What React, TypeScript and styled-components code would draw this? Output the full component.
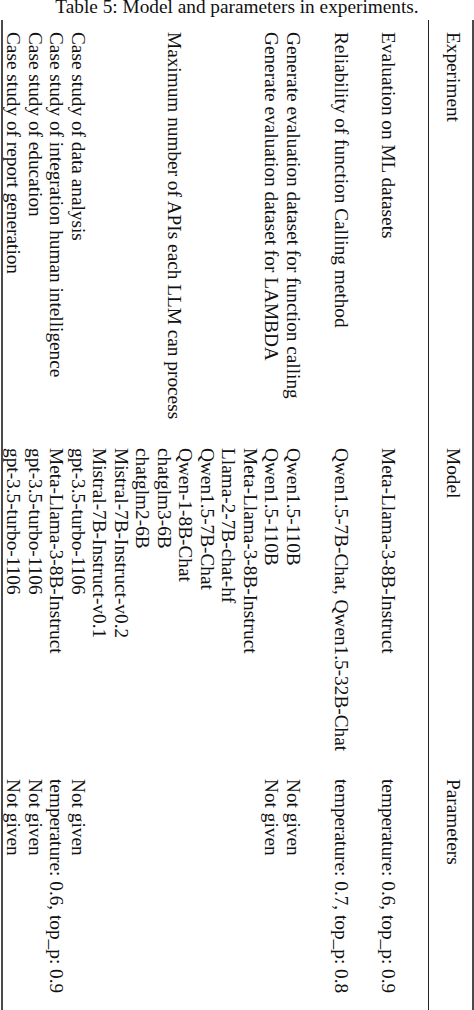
import styled, { createGlobalStyle } from "styled-components";

const GlobalStyle = createGlobalStyle`
  html, body {
    margin: 0;
    padding: 0;
    background: #ffffff;
    overflow: hidden;
  }
  body {
    font-family: "Liberation Serif", "Times New Roman", serif;
    color: #111111;
  }
`;

const Page = styled.div`
  width: 474px;
  height: 1010px;
  overflow: hidden;
  display: flex;
  flex-direction: column;
`;

const Caption = styled.div`
  margin: -5px 0 1px;
  height: 24px;
  line-height: 24px;
  font-size: 19.3px;
  text-align: center;
  white-space: nowrap;
`;

// the table is set sideways on the page, so it is laid out upright and turned a quarter
const Sideways = styled.div`
  width: 474px;
  height: 990px;
  overflow: hidden;
`;

const Table = styled.div`
  width: 1000px;
  display: flex;
  flex-direction: column;
  transform-origin: 0 0;
  transform: translateX(474px) rotate(90deg);
  font-size: 19.3px;
  line-height: 21.5px;
  white-space: nowrap;
`;

const Rule = styled.div<{ $thick?: boolean }>`
  height: ${(p) => (p.$thick ? 2 : 1)}px;
  background: ${(p) => (p.$thick ? "#4a4a4a" : "#222222")};
`;

const Row = styled.div<{ $gap?: number }>`
  display: grid;
  grid-template-columns: 428px 331px 1fr;
  margin-top: ${(p) => p.$gap ?? 0}px;
`;

const HeadRow = styled(Row)`
  padding: 8px 0 13px;
`;

const Cell = styled.div<{ $first?: boolean; $center?: boolean }>`
  display: flex;
  flex-direction: column;
  justify-content: ${(p) => (p.$center ? "center" : "flex-start")};
  padding-left: ${(p) => (p.$first ? 12 : 0)}px;
`;

interface Entry {
  experiment: string;
  models: string[];
  params: string;
  gap?: number;
}

const rows: Entry[] = [
  {
    experiment: "Evaluation on ML datasets",
    models: ["Meta-Llama-3-8B-Instruct"],
    params: "temperature: 0.6, top_p: 0.9",
    gap: 29.5,
  },
  {
    experiment: "Reliability of function Calling method",
    models: ["Qwen1.5-7B-Chat, Qwen1.5-32B-Chat"],
    params: "temperature: 0.7, top_p: 0.8",
    gap: 25.2,
  },
  {
    experiment: "Generate evaluation dataset for function calling",
    models: ["Qwen1.5-110B"],
    params: "Not given",
    gap: 27.2,
  },
  {
    experiment: "Generate evaluation dataset for LAMBDA",
    models: ["Qwen1.5-110B"],
    params: "Not given",
  },
  {
    experiment: "Maximum number of APIs each LLM can process",
    models: [
      "Meta-Llama-3-8B-Instruct",
      "Llama-2-7B-chat-hf",
      "Qwen1.5-7B-Chat",
      "Qwen-1-8B-Chat",
      "chatglm3-6B",
      "chatglm2-6B",
      "Mistral-7B-Instruct-v0.2",
      "Mistral-7B-Instruct-v0.1",
    ],
    params: "",
  },
  {
    experiment: "Case study of data analysis",
    models: ["gpt-3.5-turbo-1106"],
    params: "Not given",
  },
  {
    experiment: "Case study of integration human intelligence",
    models: ["Meta-Llama-3-8B-Instruct"],
    params: "temperature: 0.6, top_p: 0.9",
  },
  {
    experiment: "Case study of education",
    models: ["gpt-3.5-turbo-1106"],
    params: "Not given",
  },
  {
    experiment: "Case study of report generation",
    models: ["gpt-3.5-turbo-1106"],
    params: "Not given",
  },
];

export default function App() {
  return (
    <Page>
      <GlobalStyle />
      <Caption>Table 5: Model and parameters in experiments.</Caption>
      <Sideways>
        <Table>
          <Rule $thick />
          <HeadRow>
            <Cell $first>Experiment</Cell>
            <Cell>Model</Cell>
            <Cell>Parameters</Cell>
          </HeadRow>
          <Rule />
          {rows.map((row) => (
            <Row key={row.experiment} $gap={row.gap}>
              <Cell $first $center>
                {row.experiment}
              </Cell>
              <Cell>
                {row.models.map((m, i) => (
                  <span key={i}>{m}</span>
                ))}
              </Cell>
              <Cell $center>{row.params}</Cell>
            </Row>
          ))}
          <Rule $thick />
        </Table>
      </Sideways>
    </Page>
  );
}
